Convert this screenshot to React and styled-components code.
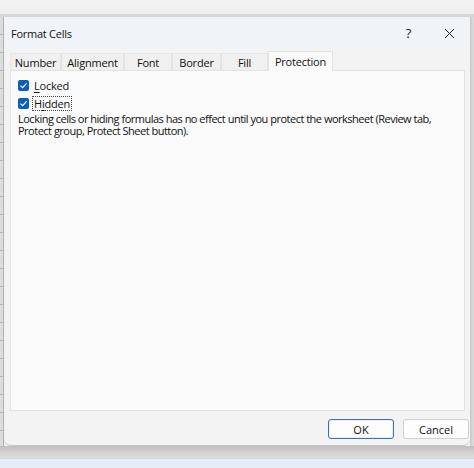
import React from "react";
import styled, { createGlobalStyle } from "styled-components";

const GlobalStyle = createGlobalStyle`
    html, body {
        margin: 0;
        padding: 0;
        background: #f2f2f2;
    }
    body {
        font-family: "Open Sans", "Noto Sans", sans-serif;
        color: #111;
    }
`;

const Screen = styled.div`
    width: 474px;
    height: 468px;
    overflow: hidden;
    display: flex;
    flex-direction: column;
    background: #f2f2f2;
`;

const TopBand = styled.div`
    height: 14px;
    flex-shrink: 0;
    background: linear-gradient(#f4f4f4, #eeeeee);
    border-bottom: 3px solid #d6d6d6;
`;

const Middle = styled.div`
    display: flex;
    height: 429px;
    flex-shrink: 0;
`;

const SheetEdge = styled.div`
    width: 3px;
    flex-shrink: 0;
    background: repeating-linear-gradient(#dcdcdc 0 17px, #b8b8b8 17px 18px);
    border-right: 1px solid #b0b0b0;
`;

const ShadowEdge = styled.div`
    width: 4px;
    flex-shrink: 0;
    background: linear-gradient(90deg, #c8c8c8, #dedede);
`;

const Dialog = styled.div`
    flex: 1;
    display: flex;
    flex-direction: column;
    background: #f3f3f3;
    border-radius: 0 0 7px 7px;
    border-bottom: 1px solid #c4c4c4;
`;

const TitleBar = styled.div`
    height: 32px;
    display: flex;
    align-items: center;
    padding-left: 7px;
    background: #f0f4f9;
    font-size: 11px;
    letter-spacing: -0.25px;
    color: #111;
`;

const Title = styled.span`
    flex: 1;
`;

const TitleButton = styled.span`
    width: 41px;
    display: flex;
    justify-content: center;
    font-size: 13px;
    color: #222;
`;

const TabRow = styled.div`
    display: flex;
    align-items: flex-end;
    height: 20px;
    padding-left: 6px;
    margin-top: 1px;
`;

const Tab = styled.div`
    height: ${props => props.active ? "20px" : "17px"};
    width: ${props => props.w}px;
    box-sizing: border-box;
    display: flex;
    align-items: center;
    justify-content: center;
    font-size: 11px;
    letter-spacing: -0.2px;
    color: #111;
    background: ${props => props.active ? "#fafafa" : "#f0f0f0"};
    border: 1px solid ${props => props.active ? "#e2e2e2" : "#e6e6e6"};
    border-bottom: none;
    margin-bottom: ${props => props.active ? "-1px" : "0"};
    position: relative;
    z-index: ${props => props.active ? 1 : 0};
    & + & {
        border-left: ${props => props.active ? "1px solid #e2e2e2" : "none"};
    }
`;

const Panel = styled.div`
    margin: 0 5px 0 6px;
    height: 341px;
    box-sizing: border-box;
    background: #fafafa;
    border: 1px solid #e3e3e3;
    padding: 6px 7px;
    font-size: 11px;
    line-height: 12px;
    letter-spacing: -0.5px;
`;

const CheckRow = styled.div`
    display: flex;
    align-items: center;
    gap: 3px;
    height: 17px;
    margin-bottom: ${props => props.last ? "1px" : "1px"};
`;

const Box = styled.span`
    width: 11px;
    height: 11px;
    border-radius: 2px;
    background: #0d5fb6;
    display: flex;
    align-items: center;
    justify-content: center;
`;

const Label = styled.span`
    padding: 0 1px;
    line-height: 13px;
    border: 1px dotted ${props => props.focused ? "#444" : "transparent"};
    font-size: 11px;
    letter-spacing: -0.2px;
`;

const Note = styled.p`
    margin: 0;
    color: #111;
`;

const Footer = styled.div`
    display: flex;
    justify-content: flex-end;
    gap: 9px;
    padding: 8px 1px 0 0;
`;

const Button = styled.button`
    width: 66px;
    height: 20px;
    box-sizing: border-box;
    border-radius: 3px;
    background: #fdfdfd;
    border: 1px solid ${props => props.primary ? "#3c6fb0" : "#d0d0d0"};
    box-shadow: ${props => props.primary ? "inset 0 0 0 1px #e8eef7" : "none"};
    font-family: inherit;
    font-size: 11px;
    color: #111;
    padding: 0;
`;

const BottomShadow = styled.div`
    height: 12px;
    flex-shrink: 0;
    background: linear-gradient(#bfbfbf, #d4d4d4 60%, #dcdcdc);
`;

const BottomBand = styled.div`
    flex: 1;
    background: #e7edf6;
    border-top: 1px solid #d0d8e4;
`;

const Check = () => (
    <svg width="9" height="9" viewBox="0 0 9 9">
        <path d="M1.5 4.6 L3.6 6.6 L7.6 2.4" fill="none" stroke="#fff" strokeWidth="1.2" />
    </svg>
);

const CloseIcon = () => (
    <svg width="11" height="11" viewBox="0 0 11 11">
        <path d="M1 1 L10 10 M10 1 L1 10" stroke="#222" strokeWidth="1" fill="none" />
    </svg>
);

const Underlined = styled.u`
    text-decoration-thickness: 1px;
    text-underline-offset: 2px;
`;

const tabs = [
    { name: "Number", w: 51 },
    { name: "Alignment", w: 63 },
    { name: "Font", w: 48 },
    { name: "Border", w: 49 },
    { name: "Fill", w: 47 },
    { name: "Protection", w: 65, active: true },
];

export default function App() {
    return (
        <Screen>
            <GlobalStyle />
            <TopBand />
            <Middle>
                <SheetEdge />
                <Dialog>
                    <TitleBar>
                        <Title>Format Cells</Title>
                        <TitleButton>?</TitleButton>
                        <TitleButton><CloseIcon /></TitleButton>
                    </TitleBar>
                    <TabRow>
                        {tabs.map(t => (
                            <Tab key={t.name} w={t.w} active={t.active}>{t.name}</Tab>
                        ))}
                    </TabRow>
                    <Panel>
                        <CheckRow>
                            <Box><Check /></Box>
                            <Label><Underlined>L</Underlined>ocked</Label>
                        </CheckRow>
                        <CheckRow last>
                            <Box><Check /></Box>
                            <Label focused>H<Underlined>i</Underlined>dden</Label>
                        </CheckRow>
                        <Note>
                            Locking cells or hiding formulas has no effect until you protect the worksheet (Review tab,
                            <br />Protect group, Protect Sheet button).
                        </Note>
                    </Panel>
                    <Footer>
                        <Button primary>OK</Button>
                        <Button>Cancel</Button>
                    </Footer>
                </Dialog>
                <ShadowEdge />
            </Middle>
            <BottomShadow />
            <BottomBand />
        </Screen>
    );
}
